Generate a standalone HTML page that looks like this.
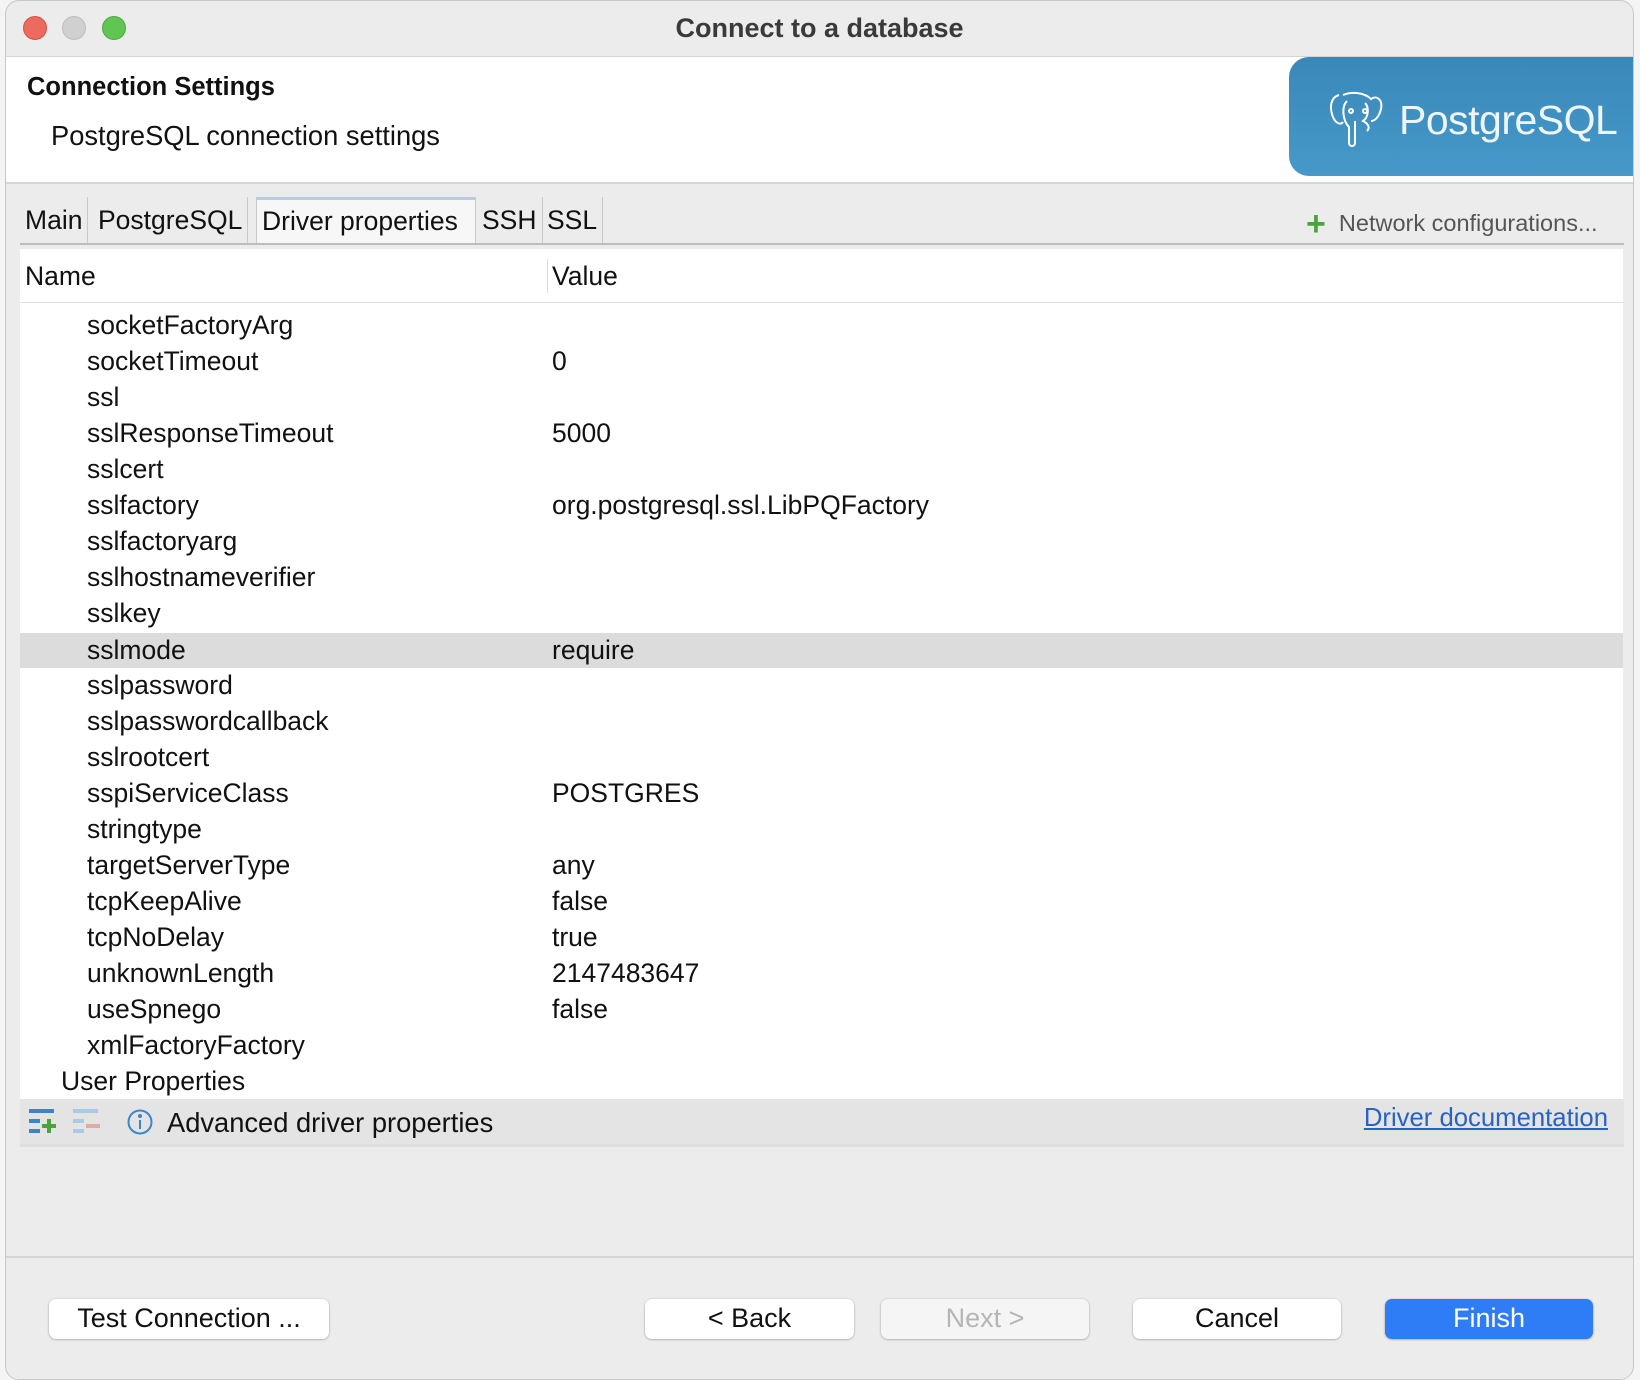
<!DOCTYPE html>
<html><head><meta charset="utf-8"><style>
*{margin:0;padding:0;box-sizing:border-box}
body{width:1640px;height:1380px;background:#f4f4f4;font-family:"Liberation Sans",Arial,sans-serif;position:relative;overflow:hidden;color:#111}
.win{position:absolute;left:5px;top:0;width:1629px;height:1380px;background:#ececec;border-radius:14px;border:1px solid #c8c8c8;overflow:hidden}
.abs{position:absolute}
.title{left:0;top:0;width:100%;height:56px;text-align:center;line-height:54px;font-size:27px;font-weight:bold;color:#3a3a3a;border-bottom:1px solid #d4d4d4}
.dot{width:24px;height:24px;border-radius:50%;top:15px}
.header{left:0;top:56px;width:100%;height:127px;background:#fff;border-bottom:2px solid #d6d6d6}
.tab{top:196px;height:47px;line-height:47px;font-size:26.5px;padding:0 5px;border-right:1px solid #c9c9c9}
.table{left:14px;top:248px;width:1603px;height:850px;background:#fff}
.row{position:absolute;left:0;width:100%;height:35px;line-height:35px;font-size:26.5px}
.row .n{position:absolute;left:67px}
.row .v{position:absolute;left:532px}
.btn{top:1298px;height:40px;line-height:38px;background:#fff;border-radius:7px;box-shadow:0 0.5px 2px rgba(0,0,0,.35);text-align:center;font-size:27px}
</style></head><body>
<div class="win">
<div class="abs title">Connect to a database</div>
<div class="abs dot" style="left:17px;background:#ed6a5e;border:1px solid #d65245"></div>
<div class="abs dot" style="left:56px;background:#d0d0d0;border:1px solid #bdbdbd"></div>
<div class="abs dot" style="left:96px;background:#61c554;border:1px solid #4ea842"></div>
<div class="abs header">
 <div class="abs" style="left:21px;top:16px;font-size:25.5px;font-weight:bold">Connection Settings</div>
 <div class="abs" style="left:45px;top:63px;font-size:27.3px">PostgreSQL connection settings</div>
 <div class="abs" style="left:1283px;top:0;width:346px;height:119px;border-radius:20px 0 0 20px;background:linear-gradient(#3a88b9,#4599c9)">
  <svg class="abs" style="left:36px;top:30px" width="62" height="62" viewBox="0 0 62 62" fill="none" stroke="#fff" stroke-width="2"><path d="M14 8c-8 2-10 12-6 22 3 7 8 8 10 5M18 8c10-4 22-2 28 4 5-4 12 0 10 10-2 8-6 12-10 12M22 14c-6 6-4 20 2 26v16c0 4 6 4 6 0V34M40 16c4 4 4 14-2 18 4 2 8 6 4 10"/><circle cx="26" cy="24" r="2"/><circle cx="40" cy="24" r="2"/></svg>
  <div class="abs" style="left:110px;top:40px;font-size:41px;color:#eef6fb;letter-spacing:-0.5px">PostgreSQL</div>
 </div>
</div>
<div class="abs tab" style="left:14px">Main</div>
<div class="abs tab" style="left:87px">PostgreSQL</div>
<div class="abs tab" style="left:250px;width:220px;background:#f7f7f7;border:1px solid #c9c9c9;border-top:3px solid #b8cde4;line-height:43px">Driver properties</div>
<div class="abs tab" style="left:471px">SSH</div>
<div class="abs tab" style="left:536px">SSL</div>
<div class="abs" style="left:14px;top:242px;width:1604px;height:2px;background:#bdbdbd"></div>
<div class="abs" style="left:1300px;top:200px;font-size:23.5px;color:#555"><span style="color:#4aa33c;font-size:34px;position:relative;top:4px;font-weight:bold">+</span>&nbsp; Network configurations...</div>
<div class="abs table">
 <div class="abs" style="left:0;top:0;width:100%;height:54px;border-bottom:1px solid #e2e2e2;font-size:26.5px;line-height:54px"><span class="abs" style="left:5px">Name</span><span class="abs" style="left:527px;top:10px;height:34px;border-left:1px solid #ddd"></span><span class="abs" style="left:532px">Value</span></div>
 <div class="row" style="top:59px"><span class="n">socketFactoryArg</span></div>
 <div class="row" style="top:95px"><span class="n">socketTimeout</span><span class="v">0</span></div>
 <div class="row" style="top:131px"><span class="n">ssl</span></div>
 <div class="row" style="top:167px"><span class="n">sslResponseTimeout</span><span class="v">5000</span></div>
 <div class="row" style="top:203px"><span class="n">sslcert</span></div>
 <div class="row" style="top:239px"><span class="n">sslfactory</span><span class="v">org.postgresql.ssl.LibPQFactory</span></div>
 <div class="row" style="top:275px"><span class="n">sslfactoryarg</span></div>
 <div class="row" style="top:311px"><span class="n">sslhostnameverifier</span></div>
 <div class="row" style="top:347px"><span class="n">sslkey</span></div>
 <div class="row" style="top:384px;background:#dcdcdc"><span class="n">sslmode</span><span class="v">require</span></div>
 <div class="row" style="top:419px"><span class="n">sslpassword</span></div>
 <div class="row" style="top:455px"><span class="n">sslpasswordcallback</span></div>
 <div class="row" style="top:491px"><span class="n">sslrootcert</span></div>
 <div class="row" style="top:527px"><span class="n">sspiServiceClass</span><span class="v">POSTGRES</span></div>
 <div class="row" style="top:563px"><span class="n">stringtype</span></div>
 <div class="row" style="top:599px"><span class="n">targetServerType</span><span class="v">any</span></div>
 <div class="row" style="top:635px"><span class="n">tcpKeepAlive</span><span class="v">false</span></div>
 <div class="row" style="top:671px"><span class="n">tcpNoDelay</span><span class="v">true</span></div>
 <div class="row" style="top:707px"><span class="n">unknownLength</span><span class="v">2147483647</span></div>
 <div class="row" style="top:743px"><span class="n">useSpnego</span><span class="v">false</span></div>
 <div class="row" style="top:779px"><span class="n">xmlFactoryFactory</span></div>
 <div class="row" style="top:815px"><span class="n" style="left:41px">User Properties</span></div>
</div>
<div class="abs" style="left:14px;top:1098px;width:1604px;height:48px;background:#e4e4e4;border-bottom:3px solid #dedede"></div>
<svg class="abs" style="left:23px;top:1108px" width="32" height="28"><rect x="0" y="0" width="25" height="4" fill="#3a86c8"/><rect x="0" y="10" width="11" height="4" fill="#3a86c8"/><rect x="0" y="20" width="11" height="4" fill="#3a86c8"/><rect x="13" y="15" width="14" height="4" fill="#4aa33c"/><rect x="18" y="10" width="4" height="14" fill="#4aa33c"/></svg>
<svg class="abs" style="left:67px;top:1108px" width="32" height="28"><rect x="0" y="0" width="25" height="4" fill="#a9c9e4"/><rect x="0" y="10" width="11" height="4" fill="#a9c9e4"/><rect x="0" y="20" width="11" height="4" fill="#a9c9e4"/><rect x="13" y="15" width="14" height="4" fill="#e3a9a4"/></svg>
<svg class="abs" style="left:121px;top:1108px" width="26" height="26" fill="none" stroke="#3a86c8" stroke-width="2"><circle cx="13" cy="13" r="11.5"/><line x1="13" y1="11" x2="13" y2="20"/><circle cx="13" cy="7" r="1" fill="#3a86c8"/></svg>
<div class="abs" style="left:161px;top:1106px;font-size:27.3px">Advanced driver properties</div>
<div class="abs" style="right:25px;top:1103px;font-size:25.7px;color:#2a62c4;text-decoration:underline">Driver documentation</div>
<div class="abs" style="left:0;top:1255px;width:100%;height:2px;background:#d4d4d4"></div>
<div class="abs btn" style="left:43px;width:280px">Test Connection ...</div>
<div class="abs btn" style="left:639px;width:209px">&lt; Back</div>
<div class="abs btn" style="left:875px;width:208px;color:#b5b5b5;background:#f5f5f5">Next &gt;</div>
<div class="abs btn" style="left:1127px;width:208px">Cancel</div>
<div class="abs btn" style="left:1379px;width:208px;background:#2e7cf6;color:#fff">Finish</div>
</div>
</body></html>
